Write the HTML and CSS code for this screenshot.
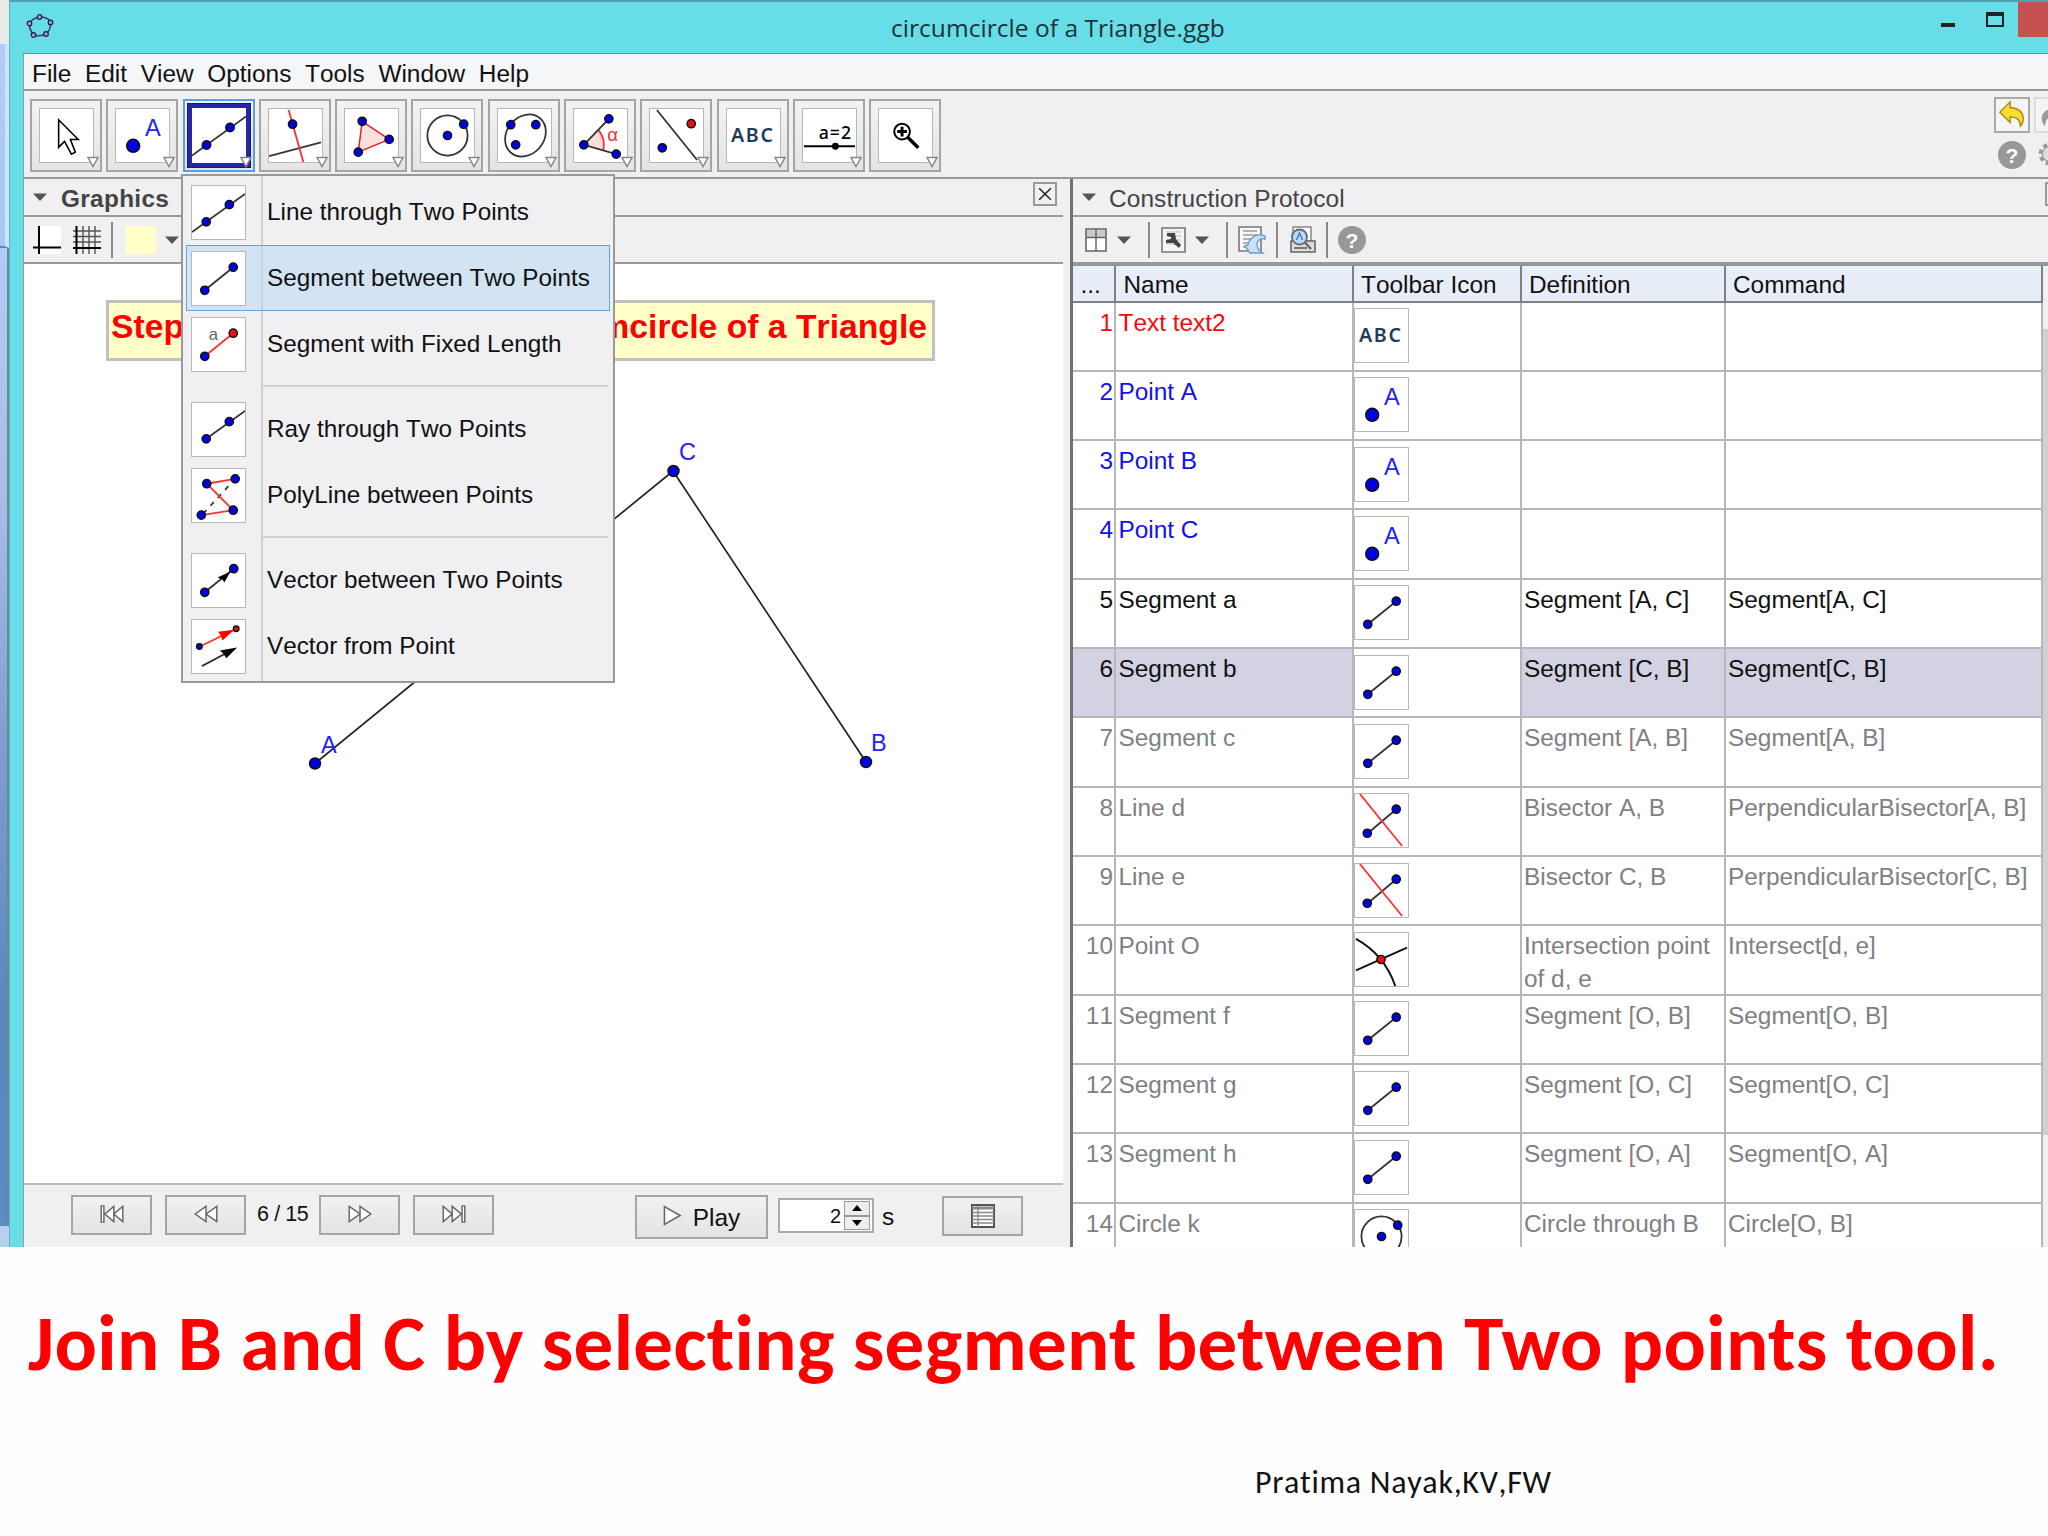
FILE: index.html
```
<!DOCTYPE html>
<html>
	<head>
		<meta charset="utf-8" />
		<title>circumcircle of a Triangle.ggb</title>
		<link rel="stylesheet" href="styles.css">
	</head>
	<body>
		<!-- tool icons -->
		<svg class="defs" width="0" height="0">
			<symbol id="i-move" viewBox="0 0 54 54"><path d="M19 11V39L25 33L32 46L36 44L31 31H39Z" fill="#fff" stroke="#000" stroke-width="1.6"/></symbol>
			<symbol id="i-point" viewBox="0 0 54 54"><circle cx="17.5" cy="37.5" r="6.6" class="pt"/><text x="29.5" y="28" class="ptname">A</text></symbol>
			<symbol id="i-line" viewBox="0 0 54 54"><path d="M0 47L54 8" class="ln"/><circle cx="14.5" cy="36.5" r="4.2" class="pt"/><circle cx="38" cy="19" r="4.2" class="pt"/></symbol>
			<symbol id="i-segment" viewBox="0 0 54 54"><path d="M13 39L42 15.5" class="ln"/><circle cx="13" cy="39" r="4.2" class="pt"/><circle cx="42" cy="15.5" r="4.2" class="pt"/></symbol>
			<symbol id="i-fixed" viewBox="0 0 54 54"><path d="M13 39L42 15.5" class="red"/><circle cx="13" cy="39" r="4.2" class="pt"/><circle cx="42" cy="15.5" r="4.2" class="pt rp"/><text x="17" y="22" class="fa">a</text></symbol>
			<symbol id="i-ray" viewBox="0 0 54 54"><path d="M14.5 36.5L54 8" class="ln"/><circle cx="14.5" cy="36.5" r="4.2" class="pt"/><circle cx="38" cy="19" r="4.2" class="pt"/></symbol>
			<symbol id="i-polyline" viewBox="0 0 54 54"><path d="M10 47L44 10" class="ln" stroke-dasharray="5 6" stroke-dashoffset="-2"/><path d="M10 47L42 42L15 15L44 10" class="red"/><circle cx="9.5" cy="47" r="4.2" class="pt"/><circle cx="42" cy="42" r="4.2" class="pt"/><circle cx="15" cy="15" r="4.2" class="pt"/><circle cx="44" cy="10" r="4.2" class="pt"/></symbol>
			<symbol id="i-vector" viewBox="0 0 54 54"><path d="M13 39L42 15.5" class="ln"/><path d="M39 18L33 29L31 26L26 24Z"/><circle cx="13" cy="39" r="4.2" class="pt"/><circle cx="42.5" cy="15" r="4.2" class="pt"/></symbol>
			<symbol id="i-vecpoint" viewBox="0 0 54 54"><path d="M8 27L45 9" class="red"/><path d="M43 10L31 21L29.5 16L26.5 12Z" fill="#f00"/><circle cx="7.5" cy="27" r="2.8" class="pt"/><circle cx="45" cy="9" r="2.8" class="pt rp"/><path d="M10 47L40 31" class="ln"/><path d="M46 28L35 39L32 34.5L28.5 31Z"/></symbol>
			<symbol id="i-perp" viewBox="0 0 54 54"><path d="M0 48L53 34" class="ln"/><path d="M20 1L35 54" class="red"/><circle cx="24" cy="15.5" r="4.2" class="pt"/></symbol>
			<symbol id="i-polygon" viewBox="0 0 54 54"><path d="M17.5 12.5L45 31L13.5 44Z" fill="#ffe0e0" stroke="#e02020" stroke-width="1.5"/><circle cx="17.5" cy="12.5" r="4.2" class="pt"/><circle cx="45" cy="31" r="4.2" class="pt"/><circle cx="13.5" cy="44" r="4.2" class="pt"/></symbol>
			<symbol id="i-circle" viewBox="0 0 54 54"><circle cx="27" cy="27" r="20.5" class="ln"/><circle cx="27" cy="27" r="4.2" class="pt"/><circle cx="43.5" cy="15.5" r="4.2" class="pt"/></symbol>
			<symbol id="i-conic" viewBox="0 0 54 54"><ellipse cx="28" cy="27" rx="23" ry="19" transform="rotate(-50 28 27)" class="ln"/><circle cx="13" cy="16" r="4.2" class="pt"/><circle cx="38.5" cy="16" r="4.2" class="pt"/><circle cx="18" cy="36.5" r="4.2" class="pt"/></symbol>
			<symbol id="i-angle" viewBox="0 0 54 54"><path d="M10 36.5L25 21.5Q31 30 30 42Z" fill="#ffdcdc"/><path d="M25 21.5Q32 30 30 42" class="red"/><path d="M35.5 10L10 36.5L43 46" class="ln"/><circle cx="10" cy="36.5" r="4.2" class="pt"/><circle cx="35.5" cy="10" r="4.2" class="pt"/><circle cx="43" cy="46" r="4.2" class="pt"/><text x="34" y="33" class="alpha">α</text></symbol>
			<symbol id="i-reflect" viewBox="0 0 54 54"><path d="M7 1L48 52" class="ln"/><circle cx="42" cy="15" r="4.2" class="pt rp"/><circle cx="12.5" cy="39.5" r="4.2" class="pt"/></symbol>
			<symbol id="i-text" viewBox="0 0 54 54"><text x="4" y="34" class="abc">ABC</text></symbol>
			<symbol id="i-slider" viewBox="0 0 54 54"><text x="16" y="30.5" class="sl" textLength="33">a=2</text><path d="M1 38H53" stroke="#000" stroke-width="2"/><circle cx="33" cy="38" r="3.5"/></symbol>
			<symbol id="i-zoom" viewBox="0 0 54 54"><circle cx="23.5" cy="23" r="8" fill="none" stroke="#000" stroke-width="2"/><path d="M23.5 18V28M18.5 23H28.5" stroke="#000" stroke-width="3"/><path d="M29 28.5L40 39.5" stroke="#000" stroke-width="3.5"/></symbol>
			<symbol id="i-bisector" viewBox="0 0 54 54"><path d="M13 40L42 15.5" class="ln"/><path d="M5 0L48 53" class="red"/><circle cx="12.5" cy="40" r="4.2" class="pt"/><circle cx="42" cy="15.5" r="4.2" class="pt"/></symbol>
			<symbol id="i-intersect" viewBox="0 0 54 54"><path d="M1 6Q30 22 41 54M1 38L53 15" class="ln thick"/><circle cx="26.5" cy="27" r="4.2" class="pt rp"/></symbol>
			<symbol id="i-help" viewBox="0 0 28 28"><circle cx="14" cy="14" r="14" fill="#989898"/><text x="14" y="21.5" text-anchor="middle" class="q">?</text></symbol>
			<symbol id="i-drop" viewBox="0 0 12 12"><path d="M1 1.5H11L6 10.5Z" fill="#fff" stroke="#888" stroke-width="1.5"/></symbol>
			<symbol id="i-arrow" viewBox="0 0 14 8"><path d="M0 0.5H14L7 8Z" fill="#555"/></symbol>
		</svg>

		<div class="screen">
			<div class="behind">
				<div class="b1"></div>
				<div class="b2"></div>
				<div class="b3"></div>
				<div class="b4"></div>
			</div>
			<div class="window">
				<div class="titlebar">
					<svg class="logo" viewBox="0 0 28 28"><path d="M13.5 4Q22 4 24.5 9Q25 17 20 21Q13 24 8 22Q3 17 3.5 10Q7 5 13.5 4Z" fill="none" stroke="#445" stroke-width="1.6"/><g fill="#99f" stroke="#223" stroke-width="1.2"><circle cx="13.5" cy="4" r="2.3"/><circle cx="24.5" cy="9.5" r="2.3"/><circle cx="20" cy="21" r="2.3"/><circle cx="7.5" cy="22" r="2.3"/><circle cx="3.5" cy="10.5" r="2.3"/></g></svg>
					<div class="caption">circumcircle of a Triangle.ggb</div>
					<div class="min"></div>
					<div class="max"></div>
					<div class="close"></div>
				</div>
				<div class="client">
					<div class="menubar">
						<span>File</span><span>Edit</span><span>View</span><span>Options</span><span>Tools</span><span>Window</span><span>Help</span>
					</div>
					<div class="toolbar">
						<div class="tool"><svg class="icon"><use href="#i-move"/></svg><svg class="drop"><use href="#i-drop"/></svg></div>
						<div class="tool"><svg class="icon"><use href="#i-point"/></svg><svg class="drop"><use href="#i-drop"/></svg></div>
						<div class="tool on"><svg class="icon"><use href="#i-line"/></svg><svg class="drop"><use href="#i-drop"/></svg></div>
						<div class="tool"><svg class="icon"><use href="#i-perp"/></svg><svg class="drop"><use href="#i-drop"/></svg></div>
						<div class="tool"><svg class="icon"><use href="#i-polygon"/></svg><svg class="drop"><use href="#i-drop"/></svg></div>
						<div class="tool"><svg class="icon"><use href="#i-circle"/></svg><svg class="drop"><use href="#i-drop"/></svg></div>
						<div class="tool"><svg class="icon"><use href="#i-conic"/></svg><svg class="drop"><use href="#i-drop"/></svg></div>
						<div class="tool"><svg class="icon"><use href="#i-angle"/></svg><svg class="drop"><use href="#i-drop"/></svg></div>
						<div class="tool"><svg class="icon"><use href="#i-reflect"/></svg><svg class="drop"><use href="#i-drop"/></svg></div>
						<div class="tool"><svg class="icon"><use href="#i-text"/></svg><svg class="drop"><use href="#i-drop"/></svg></div>
						<div class="tool"><svg class="icon"><use href="#i-slider"/></svg><svg class="drop"><use href="#i-drop"/></svg></div>
						<div class="tool"><svg class="icon"><use href="#i-zoom"/></svg><svg class="drop"><use href="#i-drop"/></svg></div>
						<div class="side">
							<div class="undo"><svg viewBox="0 0 32 32"><path d="M3 13L14 2V8Q27 9 28 19Q28 25 25 28Q25 18 14 18V24Z" fill="#f8dc30" stroke="#a88a10" stroke-width="1.5"/></svg></div>
							<div class="redo"><svg viewBox="0 0 32 32"><path d="M28 12L18 3V9Q6 10 5 19Q5 25 9 28Q8 18 18 18V24Z" fill="#999"/></svg></div>
							<svg class="help"><use href="#i-help"/></svg>
							<svg class="gear" viewBox="0 0 24 24"><circle cx="12" cy="12" r="8" fill="#ddd" stroke="#999" stroke-width="5" stroke-dasharray="3.5 2.8"/><circle cx="12" cy="12" r="7" fill="#ddd" stroke="#999"/></svg>
						</div>
					</div>
					<div class="main">
						<div class="graphics">
							<div class="head bold"><svg class="tri"><use href="#i-arrow"/></svg><span>Graphics</span>
								<div class="x"><svg viewBox="0 0 24 24"><path d="M5 5L19 19M19 5L5 19" stroke="#222" stroke-width="1.8"/></svg></div>
							</div>
							<div class="stylebar">
								<svg class="axes" viewBox="0 0 28 28"><path d="M6 0H28V28H6Z" fill="#fff"/><path d="M6 0V28M0 21.5H28" stroke="#000" stroke-width="2"/></svg>
								<svg class="grid" viewBox="0 0 28 28"><path d="M10 0V28M16 0V28M22 0V28M0 5H28M0 10.5H28M0 16H28" stroke="#555" stroke-width="1.4"/><path d="M3.5 0V28M0 22H28" stroke="#000" stroke-width="2"/></svg>
								<div class="sep"></div>
								<div class="swatch"></div>
								<svg class="tri"><use href="#i-arrow"/></svg>
							</div>
							<div class="canvas">
								<div class="steps"><span>Steps</span><span>circumcircle of a Triangle</span></div>
								<svg class="drawing" viewBox="24 264 1038 919">
									<path d="M315 763.5L673 471L866 762" fill="none" stroke="#222" stroke-width="1.7"/>
									<circle cx="315" cy="763.5" r="5.5" class="pt"/><circle cx="673.5" cy="471" r="5.5" class="pt"/><circle cx="866" cy="762" r="5.5" class="pt"/>
									<text x="321" y="752.5">A</text><text x="679" y="460">C</text><text x="871" y="751">B</text>
								</svg>
							</div>
							<div class="navbar">
								<div class="btn"><svg viewBox="0 0 28 20"><path d="M2 1H5V19H2ZM16 1.5V18.5L6 10ZM26 1.5V18.5L16 10Z" class="nv"/></svg></div>
								<div class="btn"><svg viewBox="0 0 28 20"><path d="M14 1.5V18.5L2 10ZM26 1.5V18.5L14 10Z" class="nv"/></svg></div>
								<span class="count">6 / 15</span>
								<div class="btn"><svg viewBox="0 0 28 20"><path d="M2 1.5V18.5L14 10ZM14 1.5V18.5L26 10Z" class="nv"/></svg></div>
								<div class="btn"><svg viewBox="0 0 28 20"><path d="M2 1.5V18.5L12 10ZM12 1.5V18.5L22 10ZM23 1H26V19H23Z" class="nv"/></svg></div>
								<div class="btn play"><svg viewBox="0 0 20 22"><path d="M1.5 1.5V20.5L18 11Z" class="nv"/></svg><span>Play</span></div>
								<div class="spin"><span>2</span>
									<div class="ud"><i><svg viewBox="0 0 10 6"><path d="M0 6H10L5 0Z"/></svg></i><i><svg viewBox="0 0 10 6"><path d="M0 0H10L5 6Z"/></svg></i></div>
								</div>
								<span class="sec">s</span>
								<div class="btn list"><svg viewBox="0 0 24 24"><path d="M1 1H23V23H1Z" fill="#fff" stroke="#555" stroke-width="2"/><path d="M1 4H23" stroke="#888" stroke-width="3"/><path d="M1 8.5H23M1 12H23M1 15.5H23M1 19H23M7 2V23" stroke="#888" stroke-width="1.3"/></svg></div>
							</div>
						</div>
						<div class="protocol">
							<div class="head"><svg class="tri"><use href="#i-arrow"/></svg><span>Construction Protocol</span><div class="x cut"></div></div>
							<div class="stylebar">
								<svg class="cols" viewBox="0 0 22 24"><path d="M1 1H21V23H1Z" fill="#fff" stroke="#666" stroke-width="1.6"/><path d="M2 2H20V9H2Z" fill="#ccc"/><path d="M11 1V23M1 9.5H21" stroke="#666" stroke-width="1.5"/></svg>
								<svg class="tri"><use href="#i-arrow"/></svg>
								<div class="sep s1"></div>
								<svg class="wrench" viewBox="0 0 25 26"><path d="M1 1H24V25H1Z" fill="#f4f4f4" stroke="#777" stroke-width="1.6"/><path d="M5 5H20M5 9H20M5 13H20M5 17H20" stroke="#bbb"/><path d="M6 6H14L15 12L20 18L18 21L12 16H5V13L10 12V10L6 9Z" fill="#444"/></svg>
								<svg class="tri"><use href="#i-arrow"/></svg>
								<div class="sep s2"></div>
								<svg class="sheet" viewBox="0 0 28 28"><path d="M1 1H23V25H1Z" fill="#f8f8f8" stroke="#777" stroke-width="1.6"/><path d="M5 5H19M5 9H19M5 13H14M5 17H10M5 21H8" stroke="#999" stroke-width="1.3"/><path d="M27 10Q19 7 14 12Q10 16 10 19L7 20L12 27H25L21 24Q17 18 21 14Q24 12 27 13Z" fill="#c8e0f8" stroke="#6a9bd0" stroke-width="1.4"/></svg>
								<div class="sep s3"></div>
								<svg class="print" viewBox="0 0 28 28"><path d="M4 1H22V15H4Z" fill="#fff" stroke="#888" stroke-width="1.5"/><path d="M2 15H26V26H2Z" fill="#ddd" stroke="#666" stroke-width="1.6"/><path d="M5 22H18" stroke="#777" stroke-width="2"/><circle cx="10.5" cy="11" r="7.5" fill="#b8dcf8" stroke="#667" stroke-width="1.8"/><path d="M7.5 14L10.5 7L13.5 14" fill="none" stroke="#4a80b8" stroke-width="1.5"/><path d="M16 16.5L22 23" stroke="#666" stroke-width="2.5"/></svg>
								<div class="sep s4"></div>
								<svg class="help"><use href="#i-help"/></svg>
							</div>
							<div class="tablewrap">
								<div class="table">
									<div class="row th"><div>...</div><div>Name</div><div>Toolbar Icon</div><div>Definition</div><div>Command</div></div>
									<div class="row r"><div>1</div><div>Text text2</div><div><svg class="icon"><use href="#i-text"/></svg></div><div></div><div></div></div>
									<div class="row b"><div>2</div><div>Point A</div><div><svg class="icon"><use href="#i-point"/></svg></div><div></div><div></div></div>
									<div class="row b"><div>3</div><div>Point B</div><div><svg class="icon"><use href="#i-point"/></svg></div><div></div><div></div></div>
									<div class="row b"><div>4</div><div>Point C</div><div><svg class="icon"><use href="#i-point"/></svg></div><div></div><div></div></div>
									<div class="row k"><div>5</div><div>Segment a</div><div><svg class="icon"><use href="#i-segment"/></svg></div><div>Segment [A, C]</div><div>Segment[A, C]</div></div>
									<div class="row k sel"><div>6</div><div>Segment b</div><div><svg class="icon"><use href="#i-segment"/></svg></div><div>Segment [C, B]</div><div>Segment[C, B]</div></div>
									<div class="row"><div>7</div><div>Segment c</div><div><svg class="icon"><use href="#i-segment"/></svg></div><div>Segment [A, B]</div><div>Segment[A, B]</div></div>
									<div class="row"><div>8</div><div>Line d</div><div><svg class="icon"><use href="#i-bisector"/></svg></div><div>Bisector A, B</div><div>PerpendicularBisector[A, B]</div></div>
									<div class="row"><div>9</div><div>Line e</div><div><svg class="icon"><use href="#i-bisector"/></svg></div><div>Bisector C, B</div><div>PerpendicularBisector[C, B]</div></div>
									<div class="row"><div>10</div><div>Point O</div><div><svg class="icon"><use href="#i-intersect"/></svg></div><div>Intersection point of d, e</div><div>Intersect[d, e]</div></div>
									<div class="row"><div>11</div><div>Segment f</div><div><svg class="icon"><use href="#i-segment"/></svg></div><div>Segment [O, B]</div><div>Segment[O, B]</div></div>
									<div class="row"><div>12</div><div>Segment g</div><div><svg class="icon"><use href="#i-segment"/></svg></div><div>Segment [O, C]</div><div>Segment[O, C]</div></div>
									<div class="row"><div>13</div><div>Segment h</div><div><svg class="icon"><use href="#i-segment"/></svg></div><div>Segment [O, A]</div><div>Segment[O, A]</div></div>
									<div class="row"><div>14</div><div>Circle k</div><div><svg class="icon"><use href="#i-circle"/></svg></div><div>Circle through B</div><div>Circle[O, B]</div></div>
								</div>
								<div class="scroll"><div class="thumb"></div></div>
							</div>
						</div>
					</div>
				</div>
			</div>
			<!-- open tool menu -->
			<div class="popup">
				<div class="item"><svg class="icon"><use href="#i-line"/></svg><span>Line through Two Points</span></div>
				<div class="item hot"><svg class="icon"><use href="#i-segment"/></svg><span>Segment between Two Points</span></div>
				<div class="item"><svg class="icon"><use href="#i-fixed"/></svg><span>Segment with Fixed Length</span></div>
				<div class="rule"></div>
				<div class="item"><svg class="icon"><use href="#i-ray"/></svg><span>Ray through Two Points</span></div>
				<div class="item"><svg class="icon"><use href="#i-polyline"/></svg><span>PolyLine between Points</span></div>
				<div class="rule"></div>
				<div class="item"><svg class="icon"><use href="#i-vector"/></svg><span>Vector between Two Points</span></div>
				<div class="item"><svg class="icon"><use href="#i-vecpoint"/></svg><span>Vector from Point</span></div>
			</div>
		</div>
		<p class="note">Join B and C by selecting segment between Two points tool.</p>
		<p class="author">Pratima Nayak,KV,FW</p>
	</body>
</html>
```
FILE: styles.css
```
*{
	box-sizing: border-box;
}
body{
	margin: 0;
	width: 2048px;
	height: 1536px;
	overflow: hidden;
	background: #fefefe;
	font-family: "Liberation Sans", Arial, sans-serif;
	font-size: 24.4px;
	font-kerning: none;
	color: #111;
}
svg{
	display: block;
	flex: none;
}
.defs{
	display: none;
}
.screen{
	position: relative;
	display: flex;
	height: 1247px;
	overflow: hidden;
}
/* strip of the windows behind */
.behind{
	width: 9px;
	flex: none;
}
.b1{
	height: 44px;
	background: #e8ebe8;
}
.b2{
	height: 204px;
	background: linear-gradient(#b4cdf6, #a4c8f4);
	border-right: 4px solid #cfe4fa;
	border-bottom: 2px solid #5a86b8;
}
.b3{
	height: 978px;
	background: linear-gradient(#b0ccf4, #a8bfe8 25%, #7f9fd0 50%, #5a88bd 78%, #5a8cc8);
	border-right: 2px solid #6d8794;
}
.b4{
	height: 21px;
	background: #b8d0ee;
}
.window{
	flex: 1;
	min-width: 0;
	display: flex;
	flex-direction: column;
	background: #66dde7;
	border-top: 2px solid #4fa3ae;
	border-left: 1px solid #55b8c4;
}
.titlebar{
	height: 51px;
	flex: none;
	display: flex;
	align-items: flex-start;
	overflow: hidden;
}
.titlebar > *{
	flex: none;
}
.logo{
	width: 28px;
	height: 28px;
	margin: 11px 0 0 16px;
}
.caption{
	margin-left: 837px;
	width: 1044px;
	padding-top: 9px;
	font-family: "Open Sans", sans-serif;
	font-size: 24.5px;
	line-height: 34px;
	letter-spacing: 0.05px;
	color: #1d3338;
}
.min{
	width: 14px;
	height: 4px;
	margin: 21px 0 0 6px;
	background: #222;
}
.max{
	width: 18px;
	height: 15px;
	margin: 10px 14px 0 31px;
	border: 2px solid #222;
	border-top-width: 4px;
}
.close{
	width: 40px;
	height: 35px;
	background: #c75050;
}
.client{
	flex: 1;
	min-height: 0;
	margin-left: 13px;
	display: flex;
	flex-direction: column;
	background: #f0eff1;
	border-left: 1px solid #999;
	border-top: 1px solid #489fb0;
}
.menubar{
	height: 37px;
	flex: none;
	display: flex;
	gap: 13.7px;
	padding-left: 8px;
	line-height: 39px;
	background: #f4f6f7;
	border-bottom: 2px solid #999;
}
.toolbar{
	height: 88px;
	flex: none;
	display: flex;
	gap: 4.3px;
	padding: 8px 0 0 6px;
	border-bottom: 2px solid #999;
}
.tool{
	position: relative;
	width: 72px;
	height: 73px;
	flex: none;
	padding: 7px;
	border: 2px solid #a5a5a5;
	background: linear-gradient(#f3f3f3, #e4e4e4);
}
.icon{
	width: 55px;
	height: 55px;
	background: #fff;
	border: 1.5px solid #b8b8b8;
}
.drop{
	position: absolute;
	right: 1px;
	bottom: 2px;
	width: 12px;
	height: 12px;
}
.tool.on{
	padding: 2px;
	border-color: #5b9fe0;
}
.tool.on .icon{
	width: 64px;
	height: 65px;
	border: 5px solid #2428a8;
	outline: 1.5px dotted #111;
	outline-offset: -1px;
}
.pt{
	fill: #0000e6;
	stroke: #111;
	stroke-width: 1.5;
}
.rp{
	fill: #e61010;
}
.ln{
	fill: none;
	stroke: #333;
	stroke-width: 1.8;
}
.thick{
	stroke: #111;
	stroke-width: 2;
}
.red{
	fill: none;
	stroke: #f33;
	stroke-width: 1.9;
}
.ptname{
	font-size: 24px;
	fill: #22f;
}
.fa{
	font-size: 17px;
	fill: #666;
}
.alpha{
	font-size: 19px;
	fill: #e33;
}
.abc{
	font: 600 20px "Noto Sans", sans-serif;
	letter-spacing: 1.8px;
	fill: #1f3c58;
}
.sl{
	font: 500 18px "Noto Sans", sans-serif;
}
.q{
	font: bold 21px "Liberation Sans", sans-serif;
	fill: #fff;
}
.side{
	margin-left: 1048px;
	display: grid;
	grid-template-columns: 36px 36px;
	grid-template-rows: 36px 28px;
	gap: 8px 4px;
	align-content: start;
	margin-top: -2px;
}
.undo, .redo{
	width: 36px;
	height: 36px;
	padding: 1px;
	border: 2px solid #aaa;
	background: #f4f4f4;
}
.redo{
	border-color: #ddd;
}
.side .help{
	margin-left: 4px;
}
.help{
	width: 28px;
	height: 28px;
}
.gear{
	width: 26px;
	height: 26px;
	margin-left: 3px;
}
.main{
	flex: 1;
	display: flex;
	min-height: 0;
}
.graphics{
	width: 1039px;
	flex: none;
	min-height: 0;
	display: flex;
	flex-direction: column;
}
.head{
	height: 38px;
	flex: none;
	display: flex;
	align-items: center;
	padding-left: 9px;
	color: #444;
	border-bottom: 2px solid #999;
}
.tri{
	width: 14px;
	height: 8px;
}
.head span{
	margin-left: 13px;
	line-height: 36px;
	padding-top: 3px;
	letter-spacing: 0.12px;
}
.bold span{
	margin-left: 14px;
	font-weight: bold;
	letter-spacing: 0.3px;
}
.x{
	width: 24px;
	height: 24px;
	margin: -6px 6px 0 auto;
	border: 2px solid #999;
}
.stylebar{
	height: 47px;
	flex: none;
	display: flex;
	align-items: center;
	border-bottom: 2px solid #999;
}
.sep{
	width: 2px;
	height: 36px;
	background: #888;
}
.axes{
	width: 28px;
	height: 28px;
	margin-left: 9px;
}
.grid{
	width: 28px;
	height: 28px;
	margin-left: 12px;
}
.grid + .sep{
	margin-left: 10px;
}
.swatch{
	width: 31px;
	height: 28px;
	margin: 0 9px 0 12px;
	background: #ffffc8;
}
.canvas{
	flex: 1;
	min-height: 0;
	position: relative;
	background: #fff;
}
.steps{
	position: absolute;
	left: 82px;
	top: 36px;
	width: 829px;
	height: 61px;
	padding: 0 5px 0 2px;
	display: flex;
	justify-content: space-between;
	font-size: 33.7px;
	font-weight: bold;
	line-height: 47px;
	color: #f00;
	background: #ffffc8;
	border: 3px solid #c0c0c0;
}
.drawing{
	position: absolute;
	left: 0;
	top: 0;
	width: 1038px;
	height: 919px;
}
.drawing text{
	font-size: 23.5px;
	fill: #22f;
}
.navbar{
	height: 64px;
	flex: none;
	display: flex;
	align-items: flex-start;
	padding: 10px 0 0 47px;
	border-top: 2px solid #bbb;
}
.btn{
	width: 81px;
	height: 40px;
	margin-right: 13px;
	flex: none;
	display: flex;
	align-items: center;
	justify-content: center;
	border: 2px solid #a5a5a5;
	background: linear-gradient(#f2f2f2, #e4e2e4);
}
.btn svg{
	width: 26px;
	height: 18px;
	margin-top: -2px;
}
.nv{
	fill: #fff;
	stroke: #666;
	stroke-width: 1.6;
}
.count{
	width: 62px;
	margin-left: -2px;
	font-size: 21.5px;
	line-height: 39px;
	letter-spacing: -0.4px;
	white-space: nowrap;
}
.btn.play{
	width: 133px;
	height: 44px;
	margin: 0 10px 0 128px;
	gap: 11px;
}
.play svg{
	width: 19px;
	height: 21px;
	margin-top: -4px;
}
.play span{
	padding-top: 2px;
}
.spin{
	width: 96px;
	height: 35px;
	margin-top: 3px;
	display: flex;
	justify-content: flex-end;
	font-size: 20px;
	line-height: 33px;
	background: #fff;
	border: 2px solid #aaa;
}
.ud{
	width: 26px;
	margin: 1px 2px 1px 3px;
	display: flex;
	flex-direction: column;
}
.ud i{
	flex: 1;
	display: flex;
	align-items: center;
	justify-content: center;
	background: #eee;
	border: 1.5px solid #999;
}
.ud svg{
	width: 10px;
	height: 6px;
}
.sec{
	margin: 0 48px 0 8px;
	line-height: 44px;
}
.list{
	margin-top: 1px;
}
.btn.list svg{
	width: 24px;
	height: 24px;
	margin-top: 0;
}
.protocol{
	flex: 1;
	min-width: 0;
	min-height: 0;
	margin-left: 7px;
	display: flex;
	flex-direction: column;
	border-left: 3px solid #707074;
}
.protocol .cut{
	margin-right: -21px;
}
.cols{
	width: 22px;
	height: 24px;
	margin: 0 10px 0 12px;
}
.wrench{
	width: 25px;
	height: 26px;
	margin: 0 9px 0 11px;
}
.sheet, .print{
	width: 28px;
	height: 28px;
}
.s1{
	margin-left: 17px;
}
.s2{
	margin: 0 10px 0 17px;
}
.s3{
	margin: 0 11px 0 10px;
}
.s4{
	margin: 0 10px 0 9px;
}
.tablewrap{
	flex: 1;
	display: flex;
	align-items: flex-start;
	min-height: 0;
	overflow: hidden;
	background: #fff;
	border-top: 2px solid #96969c;
}
.table{
	width: 969.5px;
	flex: none;
}
.row{
	display: grid;
	grid-template-columns: 43px 237.5px 168px 204px 317px;
	height: 69.33px;
	color: #808084;
	line-height: 32.6px;
}
.row > div{
	padding: 4px 0 0 2.5px;
	border-right: 2px solid #b8b6ba;
	border-bottom: 2px solid #b8b6ba;
	overflow: hidden;
}
.row > div:first-child{
	padding-right: 1px;
	text-align: right;
}
.row > div:nth-child(3){
	padding: 5.5px 0 0 0;
}
.row.th{
	height: 36.5px;
	background: #e8eef8;
	color: #111;
	line-height: 38px;
}
.row.th > div, .row.th > div:nth-child(3){
	padding: 0 0 0 7.5px;
	text-align: left;
	border-color: #808084;
}
.row.r{
	color: #f80808;
}
.row.b{
	color: #1010f0;
}
.row.k{
	color: #111;
}
.row.sel > div{
	background: #d2d2e2;
}
.row.sel > div:nth-child(3){
	background: #fff;
}
.scroll{
	flex: 1;
	height: 982px;
	padding-top: 63px;
	background: #f0f0f2;
}
.thumb{
	height: 806px;
	background: #d0d0d4;
}
/* tool menu */
.popup{
	position: absolute;
	left: 181px;
	top: 174px;
	width: 434px;
	height: 509px;
	padding: 3px;
	background: linear-gradient(90deg, transparent 78px, #d0d0d0 78px, #d0d0d0 80px, transparent 80px) #f0eff1;
	border: 2px solid #999;
}
.item{
	height: 66px;
	display: flex;
	align-items: center;
	padding-left: 4px;
	font-size: 24.3px;
	border: 1.5px solid transparent;
}
.item span{
	margin-left: 21px;
}
.item.hot{
	border-color: #66a3dc;
	background: rgba(180, 215, 245, 0.5);
}
.rule{
	height: 2px;
	margin: 8px 2px 9px 77px;
	background: #d2d2d2;
}
.note{
	margin: 51px 0 0 28px;
	font-family: Carlito, Calibri, Lato, sans-serif;
	font-size: 79px;
	font-weight: bold;
	font-kerning: normal;
	font-variant-ligatures: none;
	line-height: 90px;
	letter-spacing: 0.3px;
	white-space: nowrap;
	color: #f00;
}
.author{
	margin: 74px 0 0 1255px;
	font-family: Carlito, Calibri, "Open Sans", sans-serif;
	font-size: 32px;
	font-variant-ligatures: none;
	line-height: 42px;
	letter-spacing: 0.7px;
	white-space: nowrap;
}
```
